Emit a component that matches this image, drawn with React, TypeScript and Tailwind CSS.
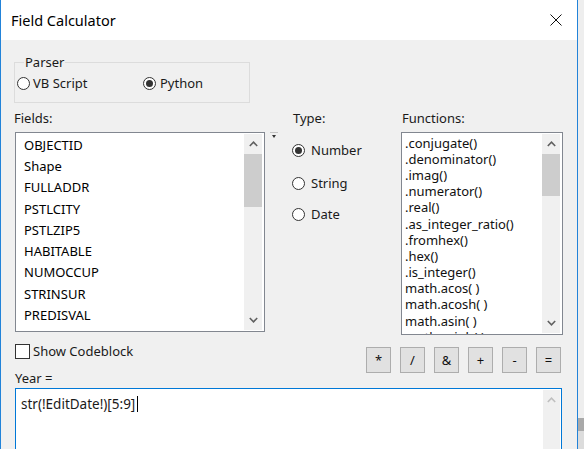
import React from 'react';

const fields = ['OBJECTID', 'Shape', 'FULLADDR', 'PSTLCITY', 'PSTLZIP5', 'HABITABLE', 'NUMOCCUP', 'STRINSUR', 'PREDISVAL'];

const functions = [
  '.conjugate()',
  '.denominator()',
  '.imag()',
  '.numerator()',
  '.real()',
  '.as_integer_ratio()',
  '.fromhex()',
  '.hex()',
  '.is_integer()',
  'math.acos( )',
  'math.acosh( )',
  'math.asin( )',
  'math.asinh( )',
];

const ops = ['*', '/', '&', '+', '-', '='];

function Chevron({ up, color = '#606060' }: { up?: boolean; color?: string }) {
  return (
    <svg width="9" height="6" viewBox="0 0 9 6">
      <polyline
        points={up ? '0.8,5 4.5,1.2 8.2,5' : '0.8,1 4.5,4.8 8.2,1'}
        fill="none"
        stroke={color}
        strokeWidth="1.6"
      />
    </svg>
  );
}

function Radio({ checked }: { checked?: boolean }) {
  return (
    <span className="w-[13px] h-[13px] rounded-full border border-[#333333] bg-white flex items-center justify-center shrink-0">
      {checked && <span className="w-[7px] h-[7px] rounded-full bg-[#333333]" />}
    </span>
  );
}

function ScrollBar({ thumb }: { thumb: string }) {
  return (
    <div className="w-[18px] my-[1px] mr-[2px] bg-[#f0f0f0] flex flex-col shrink-0">
      <div className="h-[20px] flex items-center justify-center">
        <Chevron up />
      </div>
      <div className="flex-1">
        <div className={`bg-[#cdcdcd] ${thumb}`} />
      </div>
      <div className="h-[20px] flex items-center justify-center">
        <Chevron />
      </div>
    </div>
  );
}

export default function App() {
  return (
    <div className="w-[584px] h-[449px] overflow-hidden bg-[#f0f0f0] flex font-['Noto_Sans',sans-serif] text-[#1a1a1a]">
      <div className="w-[578px] h-full border-x border-[#2283d9] flex flex-col shrink-0">
        {/* title bar */}
        <div className="h-[40px] bg-white flex items-center justify-between pl-[10px] pr-[15px] shrink-0">
          <span className="text-[14.5px] leading-[20px] text-black">Field Calculator</span>
          <svg width="12" height="12" viewBox="0 0 12 12">
            <path d="M0.5 0.5 L11.5 11.5 M11.5 0.5 L0.5 11.5" stroke="#111" strokeWidth="1" />
          </svg>
        </div>

        <div className="flex-1 bg-[#f0f0f0] pl-[13px] pr-[15px] text-[13px] leading-[16px]">
          {/* parser group */}
          <fieldset className="mt-[14px] w-[236px] border border-[#dcdcdc] pl-[2px] pb-[11px]">
            <legend className="ml-[7px] px-[1px]">Parser</legend>
            <div className="flex items-center h-[16px] mt-[5px]">
              <div className="w-[126px] flex items-center gap-[3px]">
                <Radio />
                <span>VB Script</span>
              </div>
              <div className="flex items-center gap-[4px]">
                <Radio checked />
                <span>Python</span>
              </div>
            </div>
          </fieldset>

          {/* columns */}
          <div className="flex mt-[7px]">
            <div className="w-[251px] shrink-0">
              <div className="h-[16px]">Fields:</div>
              <div className="mt-[6px] ml-[1px] w-[250px] h-[200px] border border-[#828790] bg-white flex">
                <div className="flex-1 pl-[8px] pt-[1px] overflow-hidden">
                  {fields.map((f) => (
                    <div key={f} className="h-[21.3px] flex items-center text-[13px] leading-[16px] font-[450] text-black">
                      {f}
                    </div>
                  ))}
                </div>
                <ScrollBar thumb="h-[53px]" />
              </div>
            </div>

            <div className="w-[27px] shrink-0">
              <svg className="ml-[5px] mt-[22px]" width="8" height="7" viewBox="0 0 8 7">
                <rect x="0" y="0" width="8" height="1" fill="#c4c4c4" />
                <polygon points="2,3 6,3 4,6" fill="#333" />
              </svg>
            </div>

            <div className="w-[109px] shrink-0">
              <div className="h-[16px] pl-[1px]">Type:</div>
              <div className="flex items-center gap-[6px] h-[16px] mt-[16px]">
                <Radio checked />
                <span>Number</span>
              </div>
              <div className="flex items-center gap-[6px] h-[16px] mt-[17px]">
                <Radio />
                <span>String</span>
              </div>
              <div className="flex items-center gap-[6px] h-[16px] mt-[15px]">
                <Radio />
                <span>Date</span>
              </div>
            </div>

            <div className="w-[162px] shrink-0">
              <div className="h-[16px] pl-[1px]">Functions:</div>
              <div className="mt-[6px] w-[162px] h-[203px] border border-[#828790] bg-white flex">
                <div className="flex-1 pl-[3px] pt-[2px] overflow-hidden">
                  {functions.map((f) => (
                    <div key={f} className="h-[16.2px] flex items-center text-[13px] leading-[15px] whitespace-nowrap text-[#111]">
                      {f}
                    </div>
                  ))}
                </div>
                <ScrollBar thumb="h-[42px]" />
              </div>
            </div>
          </div>

          {/* codeblock + operators */}
          <div className="flex items-start">
            <div>
              <div className="flex items-center gap-[3px] h-[16px] mt-[8px] ml-[1px]">
                <span className="w-[15px] h-[15px] border border-[#333333] bg-white shrink-0" />
                <span>Show Codeblock</span>
              </div>
              <div className="h-[16px] mt-[11px] pl-[1px]">Year =</div>
            </div>
            <div className="ml-auto mr-[1px] mt-[12px] flex gap-[9px]">
              {ops.map((o) => (
                <button
                  key={o}
                  className="w-[25px] h-[26px] bg-[#e1e1e1] border border-[#adadad] flex items-center justify-center text-[13px] text-[#111]"
                >
                  {o}
                </button>
              ))}
            </div>
          </div>

          {/* expression box */}
          <div className="mt-[2px] ml-[1px] w-[547px] h-[80px] border border-[#0078d7] bg-white flex">
            <div className="flex-1 pl-[5px] pt-[6px] text-[13.5px] leading-[18px] flex items-start">
              <span>str(!EditDate!)[5:9]</span>
              <span className="w-[1px] h-[16px] bg-black mt-[1px] ml-[2px]" />
            </div>
            <div className="w-[17px] my-[1px] mr-[1px] bg-[#f0f0f0] flex flex-col">
              <div className="h-[20px] flex items-center justify-center">
                <Chevron up color="#bfbfbf" />
              </div>
            </div>
          </div>
        </div>
      </div>

      {/* whatever sits behind the dialog */}
      <div className="flex-1 flex flex-col">
        <div className="h-[418px] bg-[#eeeeee]" />
        <div className="h-[13px] bg-[#a9a9a9]" />
        <div className="flex-1 bg-[#dcdcdc]" />
      </div>
    </div>
  );
}
